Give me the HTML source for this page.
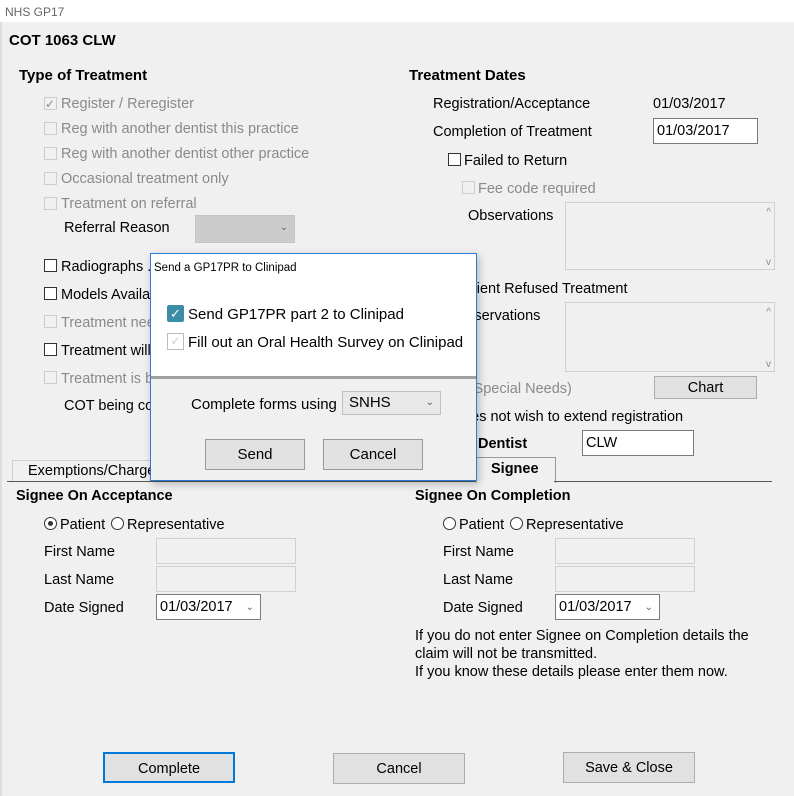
<!DOCTYPE html>
<html><head><meta charset="utf-8"><style>
body{margin:0;width:794px;height:796px;background:#f0f0f0;font-family:"Liberation Sans",Arial,sans-serif;font-size:14.5px;color:#000;position:relative;overflow:hidden}
.a{position:absolute;white-space:nowrap;line-height:18px;margin-top:1px}
.g{color:#8a8a8a}
.b{font-weight:bold}
.cb{position:absolute;width:11px;height:11px;border:1px solid #333;background:#fff}
.cbg{position:absolute;width:11px;height:11px;border:1px solid #ccc;background:#f0f0f0}
.in{position:absolute;background:#fff;border:1px solid #7a7a7a;box-sizing:border-box;padding:3px 3px 0;line-height:18px}
.dis{position:absolute;background:#f0f0f0;border:1px solid #d0d0d0;box-sizing:border-box}
.btn{position:absolute;background:#e1e1e1;border:1px solid #adadad;box-sizing:border-box;text-align:center}
.rad{position:absolute;width:11px;height:11px;border:1px solid #333;border-radius:50%;background:#fff}
.dd{position:absolute;right:6px;top:4px;color:#666;font-size:10px}
</style></head><body>
<div style="position:absolute;left:0;top:0;width:794px;height:22px;background:#fff"></div>
<div class="a" style="left:5px;top:2px;font-size:12px;color:#666">NHS GP17</div>
<div style="position:absolute;left:0;top:22px;width:2px;height:774px;background:#ddd"></div>
<div class="a b" style="left:9px;top:31px;font-size:15px">COT 1063 CLW</div>

<div class="a b" style="left:19px;top:66px;font-size:15px">Type of Treatment</div>
<div class="cbg" style="left:44px;top:97px"></div><div class="a g" style="left:45px;top:94px;font-size:12px">✓</div>
<div class="a g" style="left:61px;top:94px">Register / Reregister</div>
<div class="cbg" style="left:44px;top:122px"></div><div class="a g" style="left:61px;top:119px">Reg with another dentist this practice</div>
<div class="cbg" style="left:44px;top:147px"></div><div class="a g" style="left:61px;top:144px">Reg with another dentist other practice</div>
<div class="cbg" style="left:44px;top:172px"></div><div class="a g" style="left:61px;top:169px">Occasional treatment only</div>
<div class="cbg" style="left:44px;top:197px"></div><div class="a g" style="left:61px;top:194px">Treatment on referral</div>
<div class="a" style="left:64px;top:218px">Referral Reason</div>
<div style="position:absolute;left:195px;top:215px;width:98px;height:26px;background:#ccc;border:1px solid #c4c4c4"><span class="dd" style="top:6px">⌄</span></div>
<div class="cb" style="left:44px;top:259px"></div><div class="a" style="left:61px;top:257px">Radiographs ...</div>
<div class="cb" style="left:44px;top:287px"></div><div class="a" style="left:61px;top:285px">Models Available</div>
<div class="cbg" style="left:44px;top:315px"></div><div class="a g" style="left:61px;top:313px">Treatment need</div>
<div class="cb" style="left:44px;top:343px"></div><div class="a" style="left:61px;top:341px">Treatment will</div>
<div class="cbg" style="left:44px;top:371px"></div><div class="a g" style="left:61px;top:369px">Treatment is b</div>
<div class="a" style="left:64px;top:396px">COT being co</div>

<div class="a b" style="left:409px;top:66px;font-size:15px">Treatment Dates</div>
<div class="a" style="left:433px;top:94px">Registration/Acceptance</div>
<div class="a" style="left:653px;top:94px">01/03/2017</div>
<div class="a" style="left:433px;top:122px">Completion of Treatment</div>
<div class="in" style="left:653px;top:118px;width:105px;height:26px">01/03/2017</div>
<div class="cb" style="left:448px;top:153px"></div><div class="a" style="left:464px;top:151px">Failed to Return</div>
<div class="cbg" style="left:462px;top:181px"></div><div class="a g" style="left:478px;top:179px">Fee code required</div>
<div class="a" style="left:468px;top:206px">Observations</div>
<div class="dis" style="left:565px;top:202px;width:210px;height:68px"><span class="a g" style="right:3px;top:0;font-size:10px">^</span><span class="a g" style="right:3px;top:50px;font-size:10px">v</span></div>
<div class="a" style="left:455px;top:279px">Patient Refused Treatment</div>
<div class="a" style="left:455px;top:306px">Observations</div>
<div class="dis" style="left:565px;top:302px;width:210px;height:70px"><span class="a g" style="right:3px;top:0;font-size:10px">^</span><span class="a g" style="right:3px;top:52px;font-size:10px">v</span></div>
<div class="a g" style="left:455px;top:379px">B (Special Needs)</div>
<div class="btn" style="left:654px;top:376px;width:103px;height:23px;line-height:22px">Chart</div>
<div class="a" style="left:455px;top:407px">does not wish to extend registration</div>
<div class="a b" style="left:478px;top:434px">Dentist</div>
<div class="in" style="left:582px;top:430px;width:112px;height:26px">CLW</div>

<div style="position:absolute;left:12px;top:460px;width:150px;height:21px;border:1px solid #d0d0d0;border-bottom:none;background:#f0f0f0"></div>
<div class="a" style="left:28px;top:461px">Exemptions/Charges</div>
<div style="position:absolute;left:476px;top:457px;width:78px;height:25px;border:1px solid #999;border-bottom:none;background:#f0f0f0"></div>
<div class="a b" style="left:491px;top:459px">Signee</div>
<div style="position:absolute;left:7px;top:481px;width:765px;height:1px;background:#555"></div>
<div style="position:absolute;left:476px;top:481px;width:78px;height:1px;background:#f0f0f0"></div>

<div class="a b" style="left:16px;top:486px">Signee On Acceptance</div>
<div class="rad" style="left:44px;top:517px"></div><div style="position:absolute;left:48px;top:521px;width:5px;height:5px;border-radius:50%;background:#333"></div>
<div class="a" style="left:60px;top:515px">Patient</div>
<div class="rad" style="left:111px;top:517px"></div><div class="a" style="left:127px;top:515px">Representative</div>
<div class="a" style="left:44px;top:542px">First Name</div><div class="dis" style="left:156px;top:538px;width:140px;height:26px"></div>
<div class="a" style="left:44px;top:570px">Last Name</div><div class="dis" style="left:156px;top:566px;width:140px;height:26px"></div>
<div class="a" style="left:44px;top:598px">Date Signed</div>
<div class="in" style="left:156px;top:594px;width:105px;height:26px">01/03/2017<span class="dd">⌄</span></div>

<div class="a b" style="left:415px;top:486px">Signee On Completion</div>
<div class="rad" style="left:443px;top:517px"></div><div class="a" style="left:459px;top:515px">Patient</div>
<div class="rad" style="left:510px;top:517px"></div><div class="a" style="left:526px;top:515px">Representative</div>
<div class="a" style="left:443px;top:542px">First Name</div><div class="dis" style="left:555px;top:538px;width:140px;height:26px"></div>
<div class="a" style="left:443px;top:570px">Last Name</div><div class="dis" style="left:555px;top:566px;width:140px;height:26px"></div>
<div class="a" style="left:443px;top:598px">Date Signed</div>
<div class="in" style="left:555px;top:594px;width:105px;height:26px">01/03/2017<span class="dd">⌄</span></div>
<div class="a" style="left:415px;top:626px">If you do not enter Signee on Completion details the</div>
<div class="a" style="left:415px;top:644px">claim will not be transmitted.</div>
<div class="a" style="left:415px;top:662px">If you know these details please enter them now.</div>

<div class="btn" style="left:103px;top:752px;width:132px;height:31px;line-height:30px;border:2px solid #0078d7">Complete</div>
<div class="btn" style="left:333px;top:753px;width:132px;height:31px;line-height:30px">Cancel</div>
<div class="btn" style="left:563px;top:752px;width:132px;height:31px;line-height:30px">Save &amp; Close</div>

<!-- dialog -->
<div style="position:absolute;left:150px;top:253px;width:327px;height:228px;border:1px solid #2b7cd3;box-sizing:border-box;background:#f0f0f0;box-shadow:2px 3px 8px rgba(0,0,0,.25);font-family:'Liberation Sans',sans-serif">
 <div style="position:absolute;left:0;top:0;width:325px;height:122px;background:#fff"></div>
 <div style="position:absolute;left:0;top:122px;width:325px;height:3px;background:#a0a0a0"></div>
 <div class="a" style="left:3px;top:4px;font-size:11.5px">Send a GP17PR to Clinipad</div>
 <div style="position:absolute;left:16px;top:51px;width:17px;height:17px;background:#3b8ea5;border-radius:2px;color:#fff;font-size:13px;text-align:center;line-height:17px">✓</div>
 <div class="a" style="left:37px;top:51px;font-size:15px">Send GP17PR part 2 to Clinipad</div>
 <div style="position:absolute;left:16px;top:79px;width:15px;height:15px;border:1px solid #bbb;color:#ccc;font-size:12px;text-align:center;line-height:15px">✓</div>
 <div class="a" style="left:37px;top:79px;font-size:15px">Fill out an Oral Health Survey on Clinipad</div>
 <div class="a" style="left:40px;top:141px;font-size:15px">Complete forms using</div>
 <div style="position:absolute;left:191px;top:137px;width:99px;height:24px;border:1px solid #c0c0c0;background:#e8e8e8;box-sizing:border-box;font-size:15px;line-height:22px;padding-left:6px">SNHS<span style="position:absolute;right:6px;top:0;font-size:10px;color:#555">⌄</span></div>
 <div class="btn" style="left:54px;top:185px;width:100px;height:31px;line-height:30px;font-size:15px;border-color:#999">Send</div>
 <div class="btn" style="left:172px;top:185px;width:100px;height:31px;line-height:30px;font-size:15px;border-color:#999">Cancel</div>
</div>
</body></html>
